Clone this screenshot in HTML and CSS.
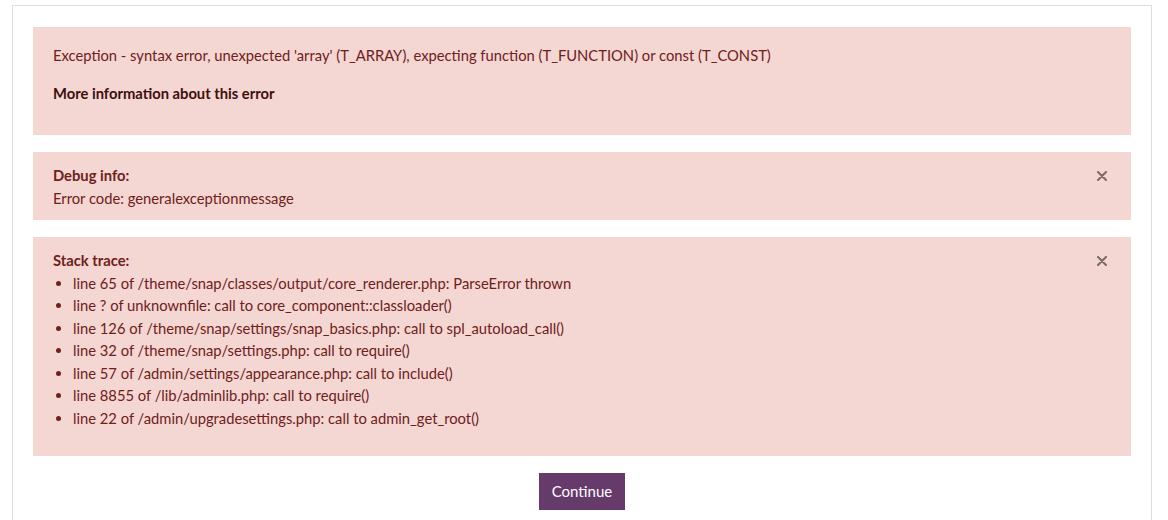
FILE: index.html
```html
<!DOCTYPE html>
<html lang="en">
<head>
    <meta charset="UTF-8">
    <title>Error</title>
    <link rel="stylesheet" href="styles.css">
</head>
<body>
    <div class="page-box">
        <div class="alert alert-main">
            <p class="message">Exception - syntax error, unexpected 'array' (T_ARRAY), expecting function (T_FUNCTION) or const (T_CONST)</p>
            <p class="more-info">More information about this error</p>
        </div>

        <div class="alert alert-dismiss">
            <button class="close" type="button" aria-label="Close">
                <svg width="10" height="10" viewBox="0 0 10 10"><path d="M1 1L9 9M9 1L1 9" stroke="currentColor" stroke-width="2" stroke-linecap="round"/></svg>
            </button>
            <div class="alert-title">Debug info:</div>
            <div>Error code: generalexceptionmessage</div>
        </div>

        <div class="alert alert-dismiss alert-trace">
            <button class="close" type="button" aria-label="Close">
                <svg width="10" height="10" viewBox="0 0 10 10"><path d="M1 1L9 9M9 1L1 9" stroke="currentColor" stroke-width="2" stroke-linecap="round"/></svg>
            </button>
            <div class="alert-title">Stack trace:</div>
            <ul class="trace">
                <li>line 65 of /theme/snap/classes/output/core_renderer.php: ParseError thrown</li>
                <li>line ? of unknownfile: call to core_component::classloader()</li>
                <li>line 126 of /theme/snap/settings/snap_basics.php: call to spl_autoload_call()</li>
                <li>line 32 of /theme/snap/settings.php: call to require()</li>
                <li>line 57 of /admin/settings/appearance.php: call to include()</li>
                <li>line 8855 of /lib/adminlib.php: call to require()</li>
                <li>line 22 of /admin/upgradesettings.php: call to admin_get_root()</li>
            </ul>
        </div>

        <div class="buttons">
            <button class="btn-continue" type="button">Continue</button>
        </div>
    </div>
</body>
</html>
```

FILE: styles.css
```css
:root {
    --alert-bg: #f4d6d3;
    --alert-text: #6e211a;
    --box-border: #dedede;
    --brand: #663a6b;
}

body {
    margin: 0;
    padding: 5px 12px 0 12px;
    font-family: 'Lato', 'Open Sans', sans-serif;
    font-size: 14.75px;
    line-height: 22.5px;
    color: #333;
    background: #fff;
    overflow: hidden;
}

.page-box {
    width: 1098px;
    min-height: 540px;
    padding: 21px 20px 0 20px;
    border: 1px solid var(--box-border);
}

.alert {
    position: relative;
    background-color: var(--alert-bg);
    color: var(--alert-text);
    padding: 12px 20px 11px 20px;
    margin-bottom: 17px;
}

.alert-main {
    padding-top: 17px;
    padding-bottom: 16px;
}

.alert-trace {
    padding-bottom: 12px;
}

.alert p {
    margin: 0 0 15px 0;
}

.more-info {
    font-weight: bold;
    color: #3d0f0b;
}

.alert-title {
    font-weight: bold;
}

.trace {
    margin: 0 0 15px 0;
    padding-left: 20px;
}

/* Close icon */
.close {
    position: absolute;
    top: 19px;
    right: 24px;
    padding: 0;
    border: 0;
    background: transparent;
    color: #7a6a68;
    line-height: 0;
    cursor: pointer;
}

.buttons {
    display: flex;
    justify-content: center;
}

.btn-continue {
    background-color: var(--brand);
    color: #fff;
    border: 0;
    font-family: inherit;
    font-size: 15px;
    line-height: 22.5px;
    padding: 7px 13px;
}
```
